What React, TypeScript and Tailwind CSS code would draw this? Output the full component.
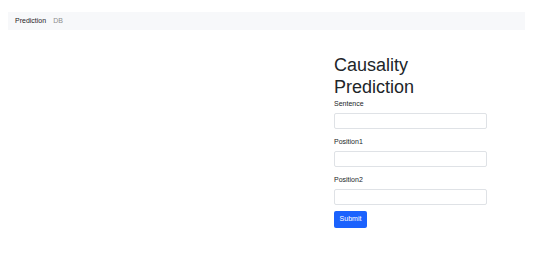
export default function App() {
  return (
    <div className="min-h-[269px] w-[539px] bg-white font-['Liberation_Sans',Arial,sans-serif] text-[#212529]">
      <nav className="ml-2 mr-[14px] pt-3">
        <div className="flex h-[18px] items-center gap-[7px] bg-[#f7f8fa] px-[7px] text-[7px]">
          <span className="text-[#1f2327]">Prediction</span>
          <span className="text-[#8d8d8d]">DB</span>
        </div>
      </nav>

      <main className="ml-[334px] w-[153px] pt-[24px]">
        <h1 className="text-[18px] leading-[22px] font-normal">
          Causality
          <br />
          Prediction
        </h1>
        <form>
          <div className="mb-[7px]">
            <label className="mb-[3px] block text-[7px] leading-[12px]">
              Sentence
            </label>
            <input
              type="text"
              className="block h-[16px] w-full rounded-[2px] border border-[#dfe2e6] bg-white"
            />
          </div>
          <div className="mb-[7px]">
            <label className="mb-[3px] block text-[7px] leading-[12px]">
              Position1
            </label>
            <input
              type="text"
              className="block h-[16px] w-full rounded-[2px] border border-[#dfe2e6] bg-white"
            />
          </div>
          <div className="mb-[6px]">
            <label className="mb-[3px] block text-[7px] leading-[12px]">
              Position2
            </label>
            <input
              type="text"
              className="block h-[16px] w-full rounded-[2px] border border-[#dfe2e6] bg-white"
            />
          </div>
          <button
            type="button"
            className="block h-[17px] w-[33px] rounded-[2px] bg-[#1b62fd] text-[7px] text-white"
          >
            Submit
          </button>
        </form>
      </main>
    </div>
  );
}
